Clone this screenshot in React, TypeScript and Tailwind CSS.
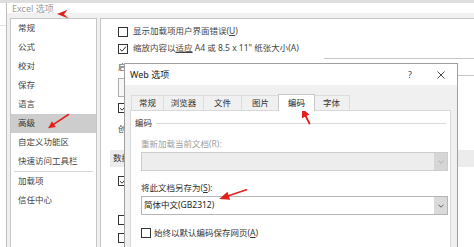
import React from "react";

function Box({ checked }: { checked?: boolean }) {
  return (
    <span className="w-[10px] h-[10px] border border-[#333] bg-white flex items-center justify-center shrink-0">
      {checked && (
        <svg width="8" height="8" viewBox="0 0 8 8">
          <path d="M1 4.2 L3.1 6.2 L7 1.6" stroke="#333" strokeWidth="1" fill="none" />
        </svg>
      )}
    </span>
  );
}

function Chevron({ color }: { color: string }) {
  return (
    <svg width="6" height="4" viewBox="0 0 6 4">
      <path d="M0.5 0.7 L3 3.2 L5.5 0.7" stroke={color} strokeWidth="0.9" fill="none" />
    </svg>
  );
}

const navItems = ["常规", "公式", "校对", "保存", "语言", "高级", "自定义功能区", "快速访问工具栏"];
const navItems2 = ["加载项", "信任中心"];

const tabs: { label: string; w: string; selected?: boolean }[] = [
  { label: "常规", w: "w-[33px]" },
  { label: "浏览器", w: "w-[41px]" },
  { label: "文件", w: "w-[39px]" },
  { label: "图片", w: "w-[39px]" },
  { label: "编码", w: "w-[37px]", selected: true },
  { label: "字体", w: "w-[37px]" },
];

export default function App() {
  return (
    <div className="relative w-[474px] h-[247px] overflow-hidden bg-white font-['Noto_Sans','Noto_Sans_CJK_SC',sans-serif] text-[8.5px] text-[#444] leading-none">
      <div className="h-[3px] bg-[#dedede]" />
      <div className="flex h-[244px]">
        {/* sheet strip behind */}
        <div className="w-[7px] border-r border-[#bdbdbd] bg-white overflow-hidden flex flex-col text-[#777]">
          <div className="h-[22px]" />
          <div className="h-px bg-[#e2e2e2]" />
        </div>
        {/* Excel options dialog */}
        <div className="flex-1 flex flex-col">
          <div className="h-[20px] bg-white flex items-center pl-[5px] text-[9px] text-[#9a9a9a]">Excel 选项</div>
          <div className="flex-1 bg-[#f0f0f0] flex pt-[5px] pl-[3px] gap-[3px]">
            {/* left nav */}
            <div className="w-[87px] border border-b-0 border-[#c6c6c6] bg-white flex flex-col">
              {navItems.map((t) => (
                <div
                  key={t}
                  className={`h-[19px] flex items-center pl-[7px] ${t === "高级" ? "bg-[#cdcdcd] text-[#333]" : ""}`}
                >
                  {t}
                </div>
              ))}
              <div className="h-px mx-[3px] bg-[#d6d6d6]" />
              {navItems2.map((t) => (
                <div key={t} className="h-[19px] flex items-center pl-[7px]">
                  {t}
                </div>
              ))}
            </div>
            {/* right panel */}
            <div className="flex-1 border border-r-0 border-b-0 border-[#c6c6c6] bg-white flex flex-col">
              <div className="mt-[4px] h-[17px] flex items-center gap-[5px] pl-[17px]">
                <Box />
                <span>
                  显示加载项用户界面错误(<span className="underline">U</span>)
                </span>
              </div>
              <div className="h-[17px] flex items-center gap-[5px] pl-[17px]">
                <Box checked />
                <span>
                  缩放内容以<span className="underline">适应</span> A4 或 8.5 x 11" 纸张大小(A)
                </span>
              </div>
              <div className="mt-[1px] h-[18px] flex items-center pl-[17px]">
                <span className="w-[6px] overflow-hidden whitespace-nowrap">启</span>
                <div className="ml-auto w-[150px] h-[18px] border-t border-b border-[#c6c6c6]" />
              </div>
              <div className="mt-[2px] ml-[17px] w-[90px] h-[19px] border border-[#adadad] bg-[#f7f7f7]" />
              <div className="mt-[2px] h-[18px] flex items-center gap-[5px] pl-[17px]">
                <Box checked />
              </div>
              <div className="mt-[3px] h-[18px] flex items-center pl-[17px]">
                <span className="w-[6px] overflow-hidden whitespace-nowrap">创</span>
              </div>
              <div className="mt-[12px] ml-[9px] h-[17px] bg-[#ececec] flex items-center pl-[3px] text-[#333]">
                <span className="w-[11px] overflow-hidden whitespace-nowrap">数据</span>
              </div>
              <div className="mt-[5px] h-[18px] flex items-center gap-[5px] pl-[17px]">
                <Box checked />
              </div>
              <div className="mt-[21px] h-[18px] flex items-center gap-[5px] pl-[17px]">
                <Box />
              </div>
              <div className="h-[18px] flex items-center gap-[5px] pl-[17px]">
                <Box />
              </div>
            </div>
          </div>
        </div>
      </div>

      {/* Web options dialog */}
      <div className="absolute left-[124px] top-[63px] w-[334px] h-[200px] border border-[#9f9f9f] bg-[#f0f0f0] flex flex-col text-[#333]">
        <div className="h-[21px] bg-white flex items-center pl-[5px] text-[9px] text-[#222]">
          <span>Web 选项</span>
          <span className="ml-auto w-[12px] text-center text-[#444]">?</span>
          <span className="w-[19px]" />
          <span className="w-[12px] flex items-center justify-center mr-[10px]">
            <svg width="8" height="8" viewBox="0 0 8 8">
              <path d="M0.5 0.5 L7.5 7.5 M7.5 0.5 L0.5 7.5" stroke="#333" strokeWidth="0.9" />
            </svg>
          </span>
        </div>
        <div className="flex-1 flex flex-col pl-[5px] pr-[6px] pt-[8px]">
          <div className="h-[17px] flex items-end pl-[1px]">
            {tabs.map((t) =>
              t.selected ? (
                <div
                  key={t.label}
                  className={`${t.w} h-[17px] -mb-px -ml-[2px] -mr-[1px] relative z-10 bg-white border border-b-0 border-[#c8c8c8] flex items-center justify-center text-[#222]`}
                >
                  {t.label}
                </div>
              ) : (
                <div
                  key={t.label}
                  className={`${t.w} h-[15px] -ml-px first:ml-0 bg-[#f0f0f0] border border-b-0 border-[#dcdcdc] flex items-center justify-center`}
                >
                  {t.label}
                </div>
              )
            )}
          </div>
          <div className="flex-1 bg-white border border-b-0 border-[#d9d9d9] flex flex-col">
            <div className="mt-[5px] h-[14px] flex items-center pl-[4px]">
              <span className="text-[#333]">编码</span>
              <div className="flex-1 h-px bg-[#dcdcdc] ml-[4px] mr-[4px]" />
            </div>
            <div className="mt-[7px] h-[14px] flex items-center pl-[10px] text-[#a0a0a0]">重新加载当前文档(R):</div>
            <div className="mt-px ml-[10px] w-[307px] h-[19px] border border-[#cccccc] bg-[#ededed] flex">
              <div className="flex-1" />
              <div className="w-[13px] bg-[#d6d6d6] flex items-center justify-center">
                <Chevron color="#a8a8a8" />
              </div>
            </div>
            <div className="mt-[10px] h-[14px] flex items-center pl-[10px]">
              将此文档另存为(<span className="underline">S</span>):
            </div>
            <div className="mt-px ml-[10px] w-[307px] h-[19px] border border-[#b5b5b5] bg-white flex items-center">
              <span className="pl-[2px] flex-1 text-[#222]">简体中文(GB2312)</span>
              <div className="w-[13px] h-full bg-[#dadada] flex items-center justify-center">
                <Chevron color="#555" />
              </div>
            </div>
            <div className="mt-[11px] h-[14px] flex items-center gap-[3px] pl-[10px]">
              <Box />
              <span>
                始终以默认编码保存网页(<span className="underline">A</span>)
              </span>
            </div>
          </div>
        </div>
      </div>

      {/* red annotation arrows */}
      <svg className="absolute inset-0 pointer-events-none" width="474" height="247" viewBox="0 0 474 247">
        <polygon points="57,14 67.5,9.8 64,14.2 68.5,18.5" fill="#e3211c" />
        <line x1="68.5" y1="114.5" x2="53.5" y2="124.4" stroke="#e3211c" strokeWidth="1.6" strokeLinecap="round" />
        <polygon points="48,128.3 52,121.3 55.8,127.1" fill="#e3211c" />
        <line x1="309.5" y1="123.5" x2="305.6" y2="116" stroke="#e3211c" strokeWidth="1.8" strokeLinecap="round" />
        <polygon points="302,108.6 309.4,114.4 302,118.2" fill="#e3211c" />
        <line x1="246.5" y1="189.8" x2="228.5" y2="195.8" stroke="#e3211c" strokeWidth="1.6" strokeLinecap="round" />
        <polygon points="219.3,199 227.4,191.8 230.2,199.8" fill="#e3211c" />
      </svg>
    </div>
  );
}
